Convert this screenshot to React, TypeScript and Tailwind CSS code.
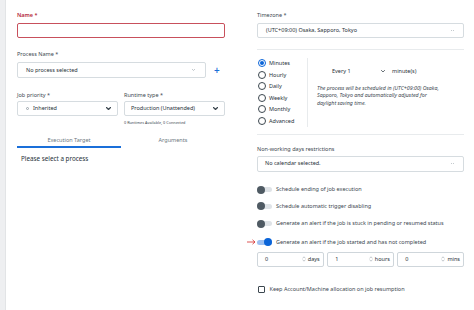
import React from "react";

const Chevron = ({ w = 4, color = "#6b7780", sw = 1 }: { w?: number; color?: string; sw?: number }) => (
  <svg width={w} height={w * 0.6} viewBox="0 0 10 6" fill="none">
    <path d="M1 1l4 4 4-4" stroke={color} strokeWidth={sw * 2} strokeLinecap="round" strokeLinejoin="round" />
  </svg>
);

const Toggle = ({ on = false }: { on?: boolean }) => (
  <div className="relative w-[15px] h-[8px] flex items-center">
    <div className={`w-[15px] h-[5px] rounded-full ${on ? "bg-[#9cc0f2]" : "bg-[#dfe3e7]"}`} />
    <div
      className={`absolute top-0 w-[8px] h-[8px] rounded-full ${on ? "left-[7px] bg-[#0a64d8]" : "left-0 bg-[#4f5a63]"}`}
    />
  </div>
);

const Radio = ({ label, checked = false }: { label: string; checked?: boolean }) => (
  <div className="h-[11.5px] flex items-center">
    <div
      className={`w-[8px] h-[8px] rounded-full border flex items-center justify-center ${
        checked ? "border-[#0a64d8]" : "border-[#3c474f]"
      }`}
    >
      {checked && <div className="w-[4px] h-[4px] rounded-full bg-[#0a64d8]" />}
    </div>
    <span className="ml-[3px] text-[5.5px] leading-[8px] text-[#273139]">{label}</span>
  </div>
);

const NumBox = ({ value, unit }: { value: string; unit: string }) => (
  <div className="flex-1 h-[15px] border border-[#cfd6db] rounded-[2px] flex items-center pl-[7px] pr-[3px]">
    <span className="flex-1 text-[5.5px] text-[#273139]">{value}</span>
    <svg width="4" height="6" viewBox="0 0 4 6" className="mr-[2px]">
      <path d="M0.5 2.4L2 0.8 3.5 2.4" stroke="#9aa4ab" strokeWidth="0.6" fill="none" />
      <path d="M0.5 3.6L2 5.2 3.5 3.6" stroke="#9aa4ab" strokeWidth="0.6" fill="none" />
    </svg>
    <span className="text-[5.5px] text-[#273139]">{unit}</span>
  </div>
);

export default function App() {
  return (
    <div className="w-[474px] h-[310px] bg-white flex overflow-hidden font-['Noto_Sans',sans-serif] text-[#273139]">
      <div className="w-[6px] h-full bg-[#eeeff1] border-r border-[#e2e4e6]" />

      {/* Left column */}
      <div className="ml-[11px] w-[208px] flex flex-col">
        <div className="mt-[11px] h-[8px] leading-[8px] text-[5.5px] font-semibold text-[#b3263a]">Name *</div>
        <div className="mt-[4px] h-[15px] border border-[#c8505c] rounded-[2px]" />

        <div className="mt-[12px] h-[8px] leading-[8px] text-[5.5px] text-[#3c474f]">Process Name *</div>
        <div className="mt-[4px] flex items-center">
          <div className="w-[189px] h-[16px] border border-[#d6dce0] rounded-[2px] flex items-center pl-[8px] pr-[10px]">
            <span className="flex-1 text-[5.5px] text-[#273139]">No process selected</span>
            <Chevron w={3} color="#9aa4ab" />
          </div>
          <span className="ml-[8px] text-[#1a6fd9] text-[10px] leading-[10px] font-semibold">+</span>
        </div>

        <div className="mt-[13px] flex gap-[6px]">
          <div className="w-[101px]">
            <div className="h-[8px] leading-[8px] text-[5.5px] text-[#3c474f]">Job priority *</div>
            <div className="mt-[2px] h-[15px] border border-[#d6dce0] rounded-[2px] flex items-center pl-[8px] pr-[6px]">
              <div className="w-[3px] h-[3px] rounded-full border border-[#9aa4ab]" />
              <span className="ml-[4px] flex-1 text-[5.5px] text-[#273139]">Inherited</span>
              <Chevron w={5} color="#3c474f" sw={1.2} />
            </div>
          </div>
          <div className="w-[101px]">
            <div className="h-[8px] leading-[8px] text-[5.5px] text-[#3c474f]">Runtime type *</div>
            <div className="mt-[2px] h-[15px] border border-[#d6dce0] rounded-[2px] flex items-center pl-[6px] pr-[6px]">
              <span className="flex-1 text-[5.5px] text-[#273139]">Production (Unattended)</span>
              <Chevron w={5} color="#3c474f" sw={1.2} />
            </div>
            <div className="mt-[4px] h-[5px] leading-[5px] text-[3.8px] text-[#3c474f]">
              0 Runtimes Available, 0 Connected
            </div>
          </div>
        </div>

        <div className="mt-[11px] flex">
          <div className="w-[104px] flex flex-col items-center">
            <div className="h-[8px] leading-[8px] text-[5.5px] text-[#6b7780]">Execution Target</div>
            <div className="mt-[2px] w-full h-[2px] bg-[#1a6fd9]" />
          </div>
          <div className="w-[104px] flex flex-col items-center">
            <div className="h-[8px] leading-[8px] text-[5.5px] text-[#6b7780]">Arguments</div>
          </div>
        </div>
        <div className="mt-[6px] pl-[4px] h-[9px] leading-[9px] text-[6.3px] text-[#273139]">Please select a process</div>
      </div>

      {/* Right column */}
      <div className="ml-[32px] w-[207px] flex flex-col">
        <div className="mt-[11px] h-[8px] leading-[8px] text-[5.5px] text-[#3c474f]">Timezone *</div>
        <div className="mt-[4px] h-[15px] border border-[#d6dce0] rounded-[2px] flex items-center pl-[8px] pr-[9px]">
          <span className="flex-1 text-[5.5px] text-[#273139]">(UTC+09:00) Osaka, Sapporo, Tokyo</span>
          <Chevron w={3} color="#9aa4ab" />
        </div>
        <div className="mt-[11px] h-px bg-[#e8ebed]" />

        <div className="mt-[7.5px] flex">
          <div className="w-[51px] border-r border-[#e8ebed] flex flex-col pl-[1px]">
            <Radio label="Minutes" checked />
            <Radio label="Hourly" />
            <Radio label="Daily" />
            <Radio label="Weekly" />
            <Radio label="Monthly" />
            <Radio label="Advanced" />
          </div>
          <div className="pl-[9px] flex flex-col">
            <div className="mt-[10px] flex items-center h-[8px] pl-[15px]">
              <span className="w-[49px] text-[5.5px] text-[#273139]">Every 1</span>
              <Chevron w={4} color="#3c474f" />
              <span className="ml-[7px] text-[5.5px] text-[#273139]">minute(s)</span>
            </div>
            <div className="mt-[9px] whitespace-nowrap text-[5.3px] leading-[7.5px] italic text-[#3c474f]">
              The process will be scheduled in (UTC+09:00) Osaka,
              <br />
              Sapporo, Tokyo and automatically adjusted for
              <br />
              daylight saving time.
            </div>
          </div>
        </div>

        <div className="mt-[7px] h-px bg-[#e8ebed]" />
        <div className="mt-[10px] h-[8px] leading-[8px] text-[5.5px] text-[#3c474f]">Non-working days restrictions</div>
        <div className="mt-[3px] h-[16px] border border-[#d6dce0] rounded-[2px] flex items-center pl-[7px] pr-[9px]">
          <span className="flex-1 text-[5.5px] text-[#273139]">No calendar selected.</span>
          <Chevron w={3} color="#9aa4ab" />
        </div>

        <div className="mt-[14px] flex items-center h-[8px]">
          <Toggle />
          <span className="ml-[4px] text-[5.5px] text-[#3c474f]">Schedule ending of job execution</span>
        </div>
        <div className="mt-[8.5px] flex items-center h-[8px]">
          <Toggle />
          <span className="ml-[4px] text-[5.5px] text-[#3c474f]">Schedule automatic trigger disabling</span>
        </div>
        <div className="mt-[9.5px] flex items-center h-[8px]">
          <Toggle />
          <span className="ml-[4px] text-[5.5px] text-[#3c474f]">
            Generate an alert if the job is stuck in pending or resumed status
          </span>
        </div>
        <div className="relative mt-[10.5px] flex items-center h-[8px]">
          <svg className="absolute left-[-10px] top-[1px]" width="9" height="6" viewBox="0 0 9 6">
            <path d="M0 3h8M5.5 0.8L8 3 5.5 5.2" stroke="#d42b2b" strokeWidth="0.8" fill="none" />
          </svg>
          <Toggle on />
          <span className="ml-[4px] text-[5.5px] text-[#3c474f]">
            Generate an alert if the job started and has not completed
          </span>
        </div>

        <div className="mt-[5.5px] flex gap-[3.5px]">
          <NumBox value="0" unit="days" />
          <NumBox value="1" unit="hours" />
          <NumBox value="0" unit="mins" />
        </div>

        <div className="mt-[19px] flex items-center h-[8px] pl-[1px]">
          <div className="w-[6.5px] h-[6.5px] border border-[#3c474f] rounded-[1px]" />
          <span className="ml-[5px] text-[5.5px] text-[#3c474f]">Keep Account/Machine allocation on job resumption</span>
        </div>
      </div>
    </div>
  );
}
